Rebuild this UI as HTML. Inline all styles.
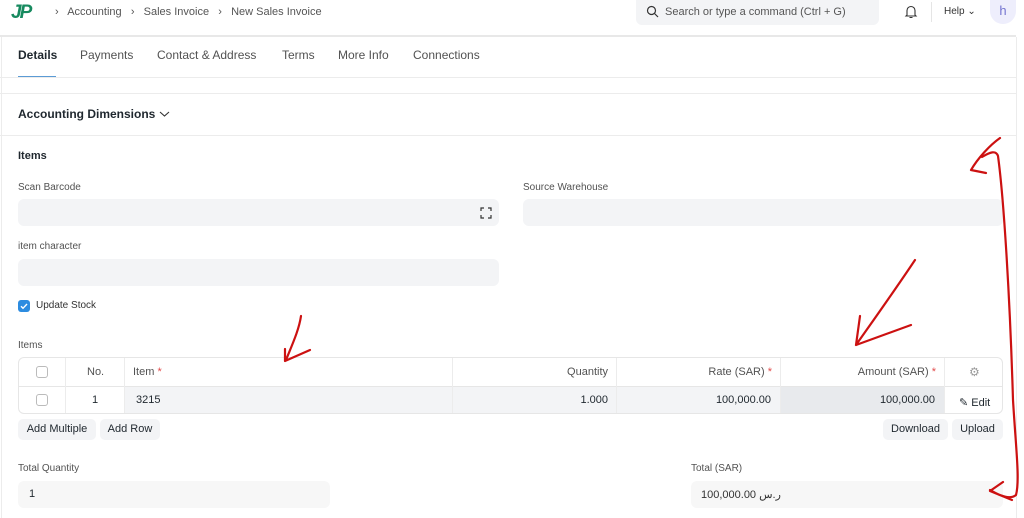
<!DOCTYPE html>
<html><head><meta charset="utf-8"><style>
*{box-sizing:border-box;margin:0;padding:0}
body{width:1024px;height:518px;overflow:hidden;background:#fff;font-family:"Liberation Sans",sans-serif;color:#1f272e;position:relative;font-size:11px}
.a{position:absolute}
.t{color:#525252}
.lbl{position:absolute;font-size:10px;color:#525252}
.inp{position:absolute;background:#f3f4f6;border-radius:6px}
.btn{position:absolute;background:#f3f4f6;border-radius:5px;font-size:11px;color:#1f272e;height:21px;line-height:21px;text-align:center}
.hl{position:absolute;left:0;width:1016px;height:1px;background:#ececec}
.vl{position:absolute;width:1px;background:#ececec}
</style></head><body>
<div class="a" style="left:11px;top:2px;font-weight:bold;font-size:19px;color:#178a5f;font-style:italic;letter-spacing:-2px">JP</div>
<div class="a t" style="left:55px;top:6px;font-size:11px;color:#555">›&nbsp;&nbsp; Accounting &nbsp;&nbsp;›&nbsp;&nbsp; Sales Invoice &nbsp;&nbsp;›&nbsp;&nbsp; New Sales Invoice</div>
<div class="a" style="left:636px;top:0;width:243px;height:25px;background:#f3f4f6;border-radius:0 0 6px 6px"></div>
<svg class="a" style="left:646px;top:5px" width="13" height="13" viewBox="0 0 13 13"><circle cx="5.5" cy="5.5" r="4" fill="none" stroke="#333" stroke-width="1.2"/><path d="M8.5 8.5L12 12" stroke="#333" stroke-width="1.2"/></svg>
<div class="a" style="left:665px;top:6px;font-size:11px;color:#555">Search or type a command (Ctrl + G)</div>
<svg class="a" style="left:904px;top:4px" width="14" height="15" viewBox="0 0 14 15"><path d="M3 11V6.5a4 4 0 0 1 8 0V11l1 1H2z M5.5 13.5h3" fill="none" stroke="#333" stroke-width="1.1"/></svg>
<div class="a" style="left:931px;top:2px;width:1px;height:20px;background:#e5e5e5"></div>
<div class="a" style="left:944px;top:6px;font-size:10px;color:#333">Help ⌄</div>
<div class="a" style="left:990px;top:0;width:26px;height:24px;border-radius:0 0 13px 13px;background:#eeeefc;color:#7575d0;text-align:center;font-size:13px;line-height:22px">h</div>
<div class="hl" style="top:35px;height:2px;background:#e8e8e8"></div>
<div class="vl" style="left:1px;top:37px;height:481px"></div>
<div class="vl" style="left:1016px;top:37px;height:481px"></div>
<div class="a" style="left:18px;top:48px;font-size:12px;font-weight:bold;color:#1f272e">Details</div>
<div class="a" style="left:18px;top:76px;width:38px;height:1px;background:#5b9bd5"></div>
<div class="a t" style="left:80px;top:48px;font-size:12px">Payments</div>
<div class="a t" style="left:157px;top:48px;font-size:12px">Contact &amp; Address</div>
<div class="a t" style="left:282px;top:48px;font-size:12px">Terms</div>
<div class="a t" style="left:338px;top:48px;font-size:12px">More Info</div>
<div class="a t" style="left:413px;top:48px;font-size:12px">Connections</div>
<div class="hl" style="top:77px"></div>
<div class="hl" style="top:93px"></div>
<div class="a" style="left:18px;top:107px;font-size:12px;font-weight:bold">Accounting Dimensions</div>
<svg class="a" style="left:159px;top:110px" width="11" height="8"><path d="M1 2l4.5 4L10 2" fill="none" stroke="#333" stroke-width="1.1"/></svg>
<div class="hl" style="top:135px"></div>
<div class="a" style="left:18px;top:150px;font-size:11px;font-weight:bold">Items</div>
<div class="lbl" style="left:18px;top:182px">Scan Barcode</div>
<div class="inp" style="left:18px;top:199px;width:481px;height:27px"></div>
<svg class="a" style="left:480px;top:207px" width="12" height="12"><path d="M1 4V1h3M8 1h3v3M11 8v3H8M4 11H1V8" fill="none" stroke="#333" stroke-width="1.2"/></svg>
<div class="lbl" style="left:523px;top:182px">Source Warehouse</div>
<div class="inp" style="left:523px;top:199px;width:480px;height:27px"></div>
<div class="lbl" style="left:18px;top:241px">item character</div>
<div class="inp" style="left:18px;top:259px;width:481px;height:27px"></div>
<div class="a" style="left:18px;top:300px;width:12px;height:12px;background:#2d8ce0;border-radius:3px"></div>
<svg class="a" style="left:18px;top:300px" width="12" height="12"><path d="M3 6.3l2 2L9 4" fill="none" stroke="#fff" stroke-width="1.4"/></svg>
<div class="a" style="left:36px;top:300px;font-size:10px;color:#333">Update Stock</div>
<div class="lbl" style="left:18px;top:340px">Items</div>
<div class="a" style="left:18px;top:357px;width:985px;height:57px;border:1px solid #e6e6e6;border-radius:6px;overflow:hidden">
 <div class="a" style="left:106px;top:28px;width:820px;height:28px;background:#f3f4f6"></div>
 <div class="a" style="left:762px;top:28px;width:164px;height:28px;background:#e8eaed"></div>
 <div class="a" style="left:0;top:28px;width:985px;height:1px;background:#e6e6e6"></div>
 <div class="vl" style="left:46px;top:0;height:57px"></div>
 <div class="vl" style="left:105px;top:0;height:57px"></div>
 <div class="vl" style="left:433px;top:0;height:57px"></div>
 <div class="vl" style="left:597px;top:0;height:57px"></div>
 <div class="vl" style="left:761px;top:0;height:57px"></div>
 <div class="vl" style="left:925px;top:0;height:57px"></div>
 <div class="a" style="left:17px;top:8px;width:12px;height:12px;border:1px solid #bbb;border-radius:3px"></div>
 <div class="a" style="left:17px;top:36px;width:12px;height:12px;border:1px solid #bbb;border-radius:3px"></div>
 <div class="a t" style="left:68px;top:8px;font-size:11px">No.</div>
 <div class="a" style="left:73px;top:36px;font-size:11px">1</div>
 <div class="a t" style="left:114px;top:8px;font-size:11px">Item <span style="color:#e24c4c">*</span></div>
 <div class="a" style="left:117px;top:36px;font-size:11px">3215</div>
 <div class="a t" style="left:480px;top:8px;width:109px;text-align:right;font-size:11px">Quantity</div>
 <div class="a" style="left:480px;top:36px;width:109px;text-align:right;font-size:11px">1.000</div>
 <div class="a t" style="left:600px;top:8px;width:153px;text-align:right;font-size:11px">Rate (SAR) <span style="color:#e24c4c">*</span></div>
 <div class="a" style="left:600px;top:36px;width:152px;text-align:right;font-size:11px">100,000.00</div>
 <div class="a t" style="left:764px;top:8px;width:153px;text-align:right;font-size:11px">Amount (SAR) <span style="color:#e24c4c">*</span></div>
 <div class="a" style="left:764px;top:36px;width:152px;text-align:right;font-size:11px">100,000.00</div>
 <div class="a" style="left:950px;top:7px;color:#999;font-size:12px">⚙</div>
 <div class="a" style="left:940px;top:38px;font-size:11px">✎ Edit</div>
</div>
<div class="btn" style="left:18px;top:419px;width:78px">Add Multiple</div>
<div class="btn" style="left:100px;top:419px;width:60px">Add Row</div>
<div class="btn" style="left:883px;top:419px;width:65px">Download</div>
<div class="btn" style="left:952px;top:419px;width:51px">Upload</div>
<div class="lbl" style="left:18px;top:463px">Total Quantity</div>
<div class="inp" style="left:18px;top:481px;width:312px;height:27px;background:#f7f7f7"></div>
<div class="a" style="left:29px;top:488px;font-size:11px">1</div>
<div class="lbl" style="left:691px;top:463px">Total (SAR)</div>
<div class="inp" style="left:691px;top:481px;width:312px;height:27px;background:#f7f7f7"></div>
<div class="a" style="left:701px;top:488px;font-size:11px;color:#333">100,000.00 ر.س</div>
<svg class="a" style="left:0;top:0" width="1024" height="518" viewBox="0 0 1024 518">
<g fill="none" stroke="#cc1111" stroke-width="2.2" stroke-linecap="round" stroke-linejoin="round">
<path d="M301 316C299 330 292 345 286 360M285 349L285 361L310 350"/>
<path d="M915 260C895 290 875 318 856 345M860 316L856 345L911 325"/>
<path d="M1000 138C990 145 978 158 971 170L986 173M982 157C990 152 996 150 998 156C1004 200 1010 300 1013 400C1016 450 1020 480 1016 495C1010 500 1000 496 990 490M1003 482L990 491L1012 500"/>
</g></svg>
</body></html>
